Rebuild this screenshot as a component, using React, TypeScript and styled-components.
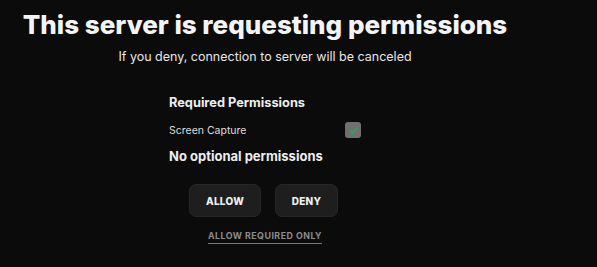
import styled, { createGlobalStyle } from "styled-components";

const GlobalStyle = createGlobalStyle`
  html, body {
    margin: 0;
    padding: 0;
    background: #0b0b0b;
    font-family: Inter, "Liberation Sans", sans-serif;
    color: #f2f2f2;
  }
`;

const Screen = styled.div`
  width: 597px;
  height: 267px;
  background: #0b0b0b;
  overflow: hidden;
`;

const Content = styled.div`
  width: 530px;
  display: flex;
  flex-direction: column;
  align-items: center;
`;

const Title = styled.h1`
  margin: 9px 0 0;
  font-size: 26px;
  font-weight: 800;
  line-height: 32px;
  white-space: nowrap;
  color: #f4f4f4;
`;

const Subtitle = styled.p`
  margin: 8px 0 0;
  font-size: 12.5px;
  line-height: 16px;
  color: #e6e6e6;
`;

const PermissionBlock = styled.div`
  width: 192px;
  margin-top: 30px;
  display: flex;
  flex-direction: column;
`;

const SectionTitle = styled.div`
  font-size: 12.8px;
  font-weight: 700;
  line-height: 16px;
  color: #eeeeee;
`;

const PermissionRow = styled.div`
  display: flex;
  justify-content: space-between;
  align-items: center;
  margin-top: 11px;
  height: 16px;
`;

const PermissionName = styled.span`
  font-size: 10.5px;
  color: #dddddd;
`;

const Checkbox = styled.span`
  width: 16px;
  height: 16px;
  border-radius: 3px;
  background: #707070;
  display: flex;
  align-items: center;
  justify-content: center;
`;

const OptionalTitle = styled(SectionTitle)`
  font-size: 13px;
  margin-top: 10px;
`;

const Buttons = styled.div`
  display: flex;
  gap: 14px;
  margin-top: 20px;
  margin-right: 3px;
`;

const Button = styled.button<{ $width: number }>`
  width: ${(p) => p.$width}px;
  height: 33px;
  border-radius: 7px;
  border: 1px solid #262626;
  background: #1e1e1e;
  color: #f0f0f0;
  font-family: Inter, "Liberation Sans", sans-serif;
  font-size: 10px;
  font-weight: 800;
  letter-spacing: 0.3px;
  padding: 0;
`;

const TextLink = styled.a`
  margin-top: 13px;
  font-size: 8.8px;
  font-weight: 700;
  letter-spacing: 0.5px;
  color: #8c8c8c;
  text-decoration: none;
  padding-bottom: 2px;
  border-bottom: 1px solid #7a7a7a;
  line-height: 11px;
`;

export default function App() {
  return (
    <Screen>
      <GlobalStyle />
      <Content>
        <Title>This server is requesting permissions</Title>
        <Subtitle>If you deny, connection to server will be canceled</Subtitle>
        <PermissionBlock>
          <SectionTitle>Required Permissions</SectionTitle>
          <PermissionRow>
            <PermissionName>Screen Capture</PermissionName>
            <Checkbox>
              <svg width="11" height="11" viewBox="0 0 12 12">
                <path d="M2.4 6.3l2.4 2.4L9.6 3.8" fill="none" stroke="#22a95a" strokeWidth="2" strokeLinecap="round" strokeLinejoin="round" />
              </svg>
            </Checkbox>
          </PermissionRow>
          <OptionalTitle>No optional permissions</OptionalTitle>
        </PermissionBlock>
        <Buttons>
          <Button $width={72}>ALLOW</Button>
          <Button $width={63}>DENY</Button>
        </Buttons>
        <TextLink href="#">ALLOW REQUIRED ONLY</TextLink>
      </Content>
    </Screen>
  );
}
